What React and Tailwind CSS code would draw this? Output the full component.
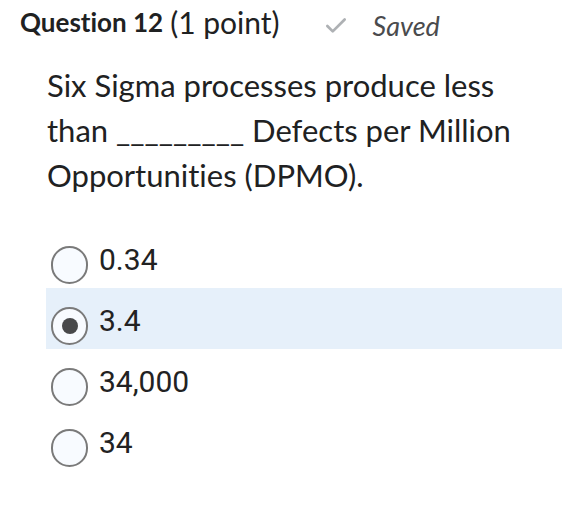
import { Check } from 'lucide-react';

const options = [
  { label: '0.34', selected: false },
  { label: '3.4', selected: true },
  { label: '34,000', selected: false },
  { label: '34', selected: false },
];

function Radio({ selected }) {
  return (
    <span className="mt-[19px] flex h-[38px] w-[37px] shrink-0 items-center justify-center rounded-full border-2 border-[#7a7a7a] bg-[#f8fbff]">
      {selected && <span className="h-[16px] w-[16px] rounded-full bg-[#48494b]" />}
    </span>
  );
}

export default function App() {
  return (
    <div className="h-[526px] w-[576px] overflow-hidden bg-white font-['Lato',sans-serif] text-[#202122] [font-variant-ligatures:none]">
      {/* header */}
      <div className="flex h-[44px] items-center pl-[20px]">
        <span className="text-[26px] font-bold leading-[44px]">Question 12</span>
        <span className="ml-[7px] text-[30px] leading-[44px]">(1 point)</span>
        <Check className="ml-[43px] h-[26px] w-[26px] translate-y-[4px] text-[#aeb1b4]" strokeWidth={2.5} />
        <span className="ml-[24px] translate-y-[4px] text-[27px] italic leading-[44px] text-[#4a4b4d]">Saved</span>
      </div>

      {/* question text */}
      <p className="mt-[19px] pl-[47px] pr-[40px] text-[31px] leading-[45px]">
        Six Sigma processes produce less than _________ Defects per Million Opportunities (DPMO).
      </p>

      {/* options */}
      <div className="mt-[29px] flex flex-col">
        {options.map((o) => (
          <div
            key={o.label}
            className={`ml-[46px] mr-[14px] flex h-[61px] items-start gap-[11px] pl-[5px] ${o.selected ? 'bg-[#e6f0fa]' : ''}`}
          >
            <Radio selected={o.selected} />
            <span className="mt-[18px] font-['Roboto',sans-serif] text-[30px] leading-[30px] text-[#222]">{o.label}</span>
          </div>
        ))}
      </div>
    </div>
  );
}
